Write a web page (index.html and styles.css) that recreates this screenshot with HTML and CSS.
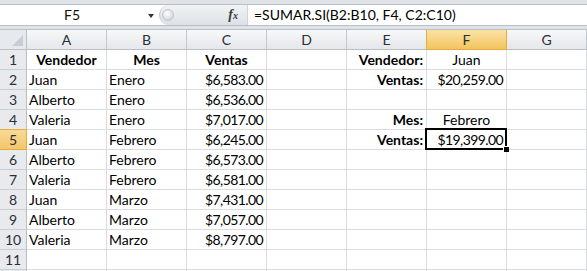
FILE: index.html
```html
<!DOCTYPE html>
<html>
<head>
<meta charset="utf-8">
<link rel="stylesheet" href="styles.css">
</head>
<body>
<div class="toolbar">
  <div class="bar">
    <div class="namebox"><span class="name">F5</span><span class="arrow"></span></div>
    <div class="fxbox"><span class="grip"></span><span class="fx"><i>f</i><i class="x">x</i></span></div>
    <div class="formula">=SUMAR.SI(B2:B10, F4, C2:C10)</div>
  </div>
</div>
<div class="sheet">
  <div class="corner"><span class="tri"></span></div>
  <div class="ch">A</div><div class="ch">B</div><div class="ch">C</div><div class="ch">D</div><div class="ch">E</div><div class="ch sel">F</div><div class="ch">G</div>

  <div class="rh">1</div><div class="cell b c">Vendedor</div><div class="cell b c">Mes</div><div class="cell b c">Ventas</div><div class="cell"></div><div class="cell b r">Vendedor:</div><div class="cell c">Juan</div><div class="cell"></div>
  <div class="rh">2</div><div class="cell">Juan</div><div class="cell">Enero</div><div class="cell r num">$6,583.00</div><div class="cell"></div><div class="cell b r">Ventas:</div><div class="cell r num">$20,259.00</div><div class="cell"></div>
  <div class="rh">3</div><div class="cell">Alberto</div><div class="cell">Enero</div><div class="cell r num">$6,536.00</div><div class="cell"></div><div class="cell"></div><div class="cell"></div><div class="cell"></div>
  <div class="rh">4</div><div class="cell">Valeria</div><div class="cell">Enero</div><div class="cell r num">$7,017.00</div><div class="cell"></div><div class="cell b r">Mes:</div><div class="cell c">Febrero</div><div class="cell"></div>
  <div class="rh sel">5</div><div class="cell">Juan</div><div class="cell">Febrero</div><div class="cell r num">$6,245.00</div><div class="cell"></div><div class="cell b r">Ventas:</div><div class="cell r num active">$19,399.00</div><div class="cell"></div>
  <div class="rh">6</div><div class="cell">Alberto</div><div class="cell">Febrero</div><div class="cell r num">$6,573.00</div><div class="cell"></div><div class="cell"></div><div class="cell"></div><div class="cell"></div>
  <div class="rh">7</div><div class="cell">Valeria</div><div class="cell">Febrero</div><div class="cell r num">$6,581.00</div><div class="cell"></div><div class="cell"></div><div class="cell"></div><div class="cell"></div>
  <div class="rh">8</div><div class="cell">Juan</div><div class="cell">Marzo</div><div class="cell r num">$7,431.00</div><div class="cell"></div><div class="cell"></div><div class="cell"></div><div class="cell"></div>
  <div class="rh">9</div><div class="cell">Alberto</div><div class="cell">Marzo</div><div class="cell r num">$7,057.00</div><div class="cell"></div><div class="cell"></div><div class="cell"></div><div class="cell"></div>
  <div class="rh">10</div><div class="cell">Valeria</div><div class="cell">Marzo</div><div class="cell r num">$8,797.00</div><div class="cell"></div><div class="cell"></div><div class="cell"></div><div class="cell"></div>
  <div class="rh">11</div><div class="cell"></div><div class="cell"></div><div class="cell"></div><div class="cell"></div><div class="cell"></div><div class="cell"></div><div class="cell"></div>
  <div class="rh"></div><div class="cell"></div><div class="cell"></div><div class="cell"></div><div class="cell"></div><div class="cell"></div><div class="cell"></div><div class="cell"></div>
</div>
</body>
</html>
```
FILE: styles.css
```css
html, body {
  margin: 0;
  padding: 0;
  background: #ffffff;
  overflow: hidden;
}
body {
  width: 587px;
  height: 271px;
  font-family: "Lato", "Liberation Sans", sans-serif;
  font-size: 14px;
  color: #000;
}
.toolbar {
  height: 29px;
  box-sizing: border-box;
  padding-top: 4px;
  background: #dfe3e8;
}
.bar {
  height: 22px;
  box-sizing: border-box;
  border-top: 1px solid #b9bfc7;
  border-bottom: 1px solid #b9bfc7;
  background: #fff;
  display: flex;
}
.namebox {
  width: 159px;
  display: flex;
  align-items: center;
}
.name {
  width: 144px;
  text-align: center;
  line-height: 20px;
  color: #111;
}
.arrow {
  width: 0;
  height: 0;
  border-left: 3.5px solid transparent;
  border-right: 3.5px solid transparent;
  border-top: 4px solid #333;
  margin-left: 4px;
  margin-top: 1px;
}
.fxbox {
  width: 88px;
  height: 20px;
  box-sizing: border-box;
  border-radius: 10px 0 0 10px;
  background: linear-gradient(#f1f3f5, #dde1e6);
  border-left: 1px solid #c4c9cf;
  display: flex;
  align-items: center;
  justify-content: space-between;
}
.grip {
  width: 12px;
  height: 12px;
  margin-left: 2px;
  border-radius: 50%;
  box-sizing: border-box;
  border: 1px solid #c0c5cc;
  background: radial-gradient(circle at 40% 35%, #ffffff, #d6dade 70%, #c3c8ce);
}
.fx {
  font-family: "Liberation Serif", "DejaVu Serif", serif;
  font-weight: bold;
  font-size: 14px;
  color: #3b3b3b;
  margin-right: 9px;
  line-height: 20px;
}
.fx .x {
  font-size: 10px;
}
.formula {
  flex: 1;
  padding-left: 6px;
  line-height: 20px;
  color: #000;
  border-left: 1px solid #d0d4da;
  white-space: nowrap;
}
.sheet {
  display: grid;
  grid-template-columns: 27px repeat(7, 80px);
  grid-template-rows: 21px repeat(12, 20px);
}
.corner {
  box-sizing: border-box;
  border-top: 1px solid #b9bfc7;
  border-right: 1px solid #b9bfc7;
  border-bottom: 1px solid #b9bfc7;
  background: #e6e9ed;
  position: relative;
}
.tri {
  position: absolute;
  right: 3px;
  bottom: 3px;
  width: 0;
  height: 0;
  border-left: 11px solid transparent;
  border-bottom: 11px solid #c9cdd3;
}
.ch {
  box-sizing: border-box;
  border-top: 1px solid #b9bfc7;
  border-right: 1px solid #c3c8ce;
  border-bottom: 1px solid #b9bfc7;
  background: linear-gradient(#f7f8f9, #e4e7eb);
  text-align: center;
  line-height: 19px;
  color: #2a2f36;
}
.ch.sel {
  background: linear-gradient(#fbe3a6, #f2c45f);
  border-right-color: #e6ac3c;
  border-left: 1px solid #e6ac3c;
  border-bottom-color: #e6ac3c;
  margin-left: -1px;
}
.rh {
  box-sizing: border-box;
  border-right: 1px solid #b9bfc7;
  border-bottom: 1px solid #c9ced4;
  background: #e8eaee;
  text-align: center;
  line-height: 19px;
  color: #2a2f36;
}
.rh.sel {
  background: linear-gradient(#fad998, #f3c669);
  border-right-color: #e6ac3c;
  border-bottom-color: #e6ac3c;
  border-top: 1px solid #e6ac3c;
  margin-top: -1px;
}
.cell {
  box-sizing: border-box;
  border-right: 1px solid #dadcdd;
  border-bottom: 1px solid #dadcdd;
  line-height: 19px;
  padding: 0 2px;
  white-space: nowrap;
}
.b { font-weight: bold; }
.c { text-align: center; }
.r { text-align: right; padding-right: 3px; }
.num { letter-spacing: -0.6px; }
.active {
  position: relative;
}
.active::after {
  content: "";
  position: absolute;
  left: -2px;
  top: -2px;
  right: -1px;
  bottom: -1px;
  border: 2px solid #000;
}
.active::before {
  content: "";
  position: absolute;
  right: -3px;
  bottom: -3px;
  width: 5px;
  height: 5px;
  background: #000;
  border-left: 1px solid #fff;
  border-top: 1px solid #fff;
  z-index: 1;
}
```
